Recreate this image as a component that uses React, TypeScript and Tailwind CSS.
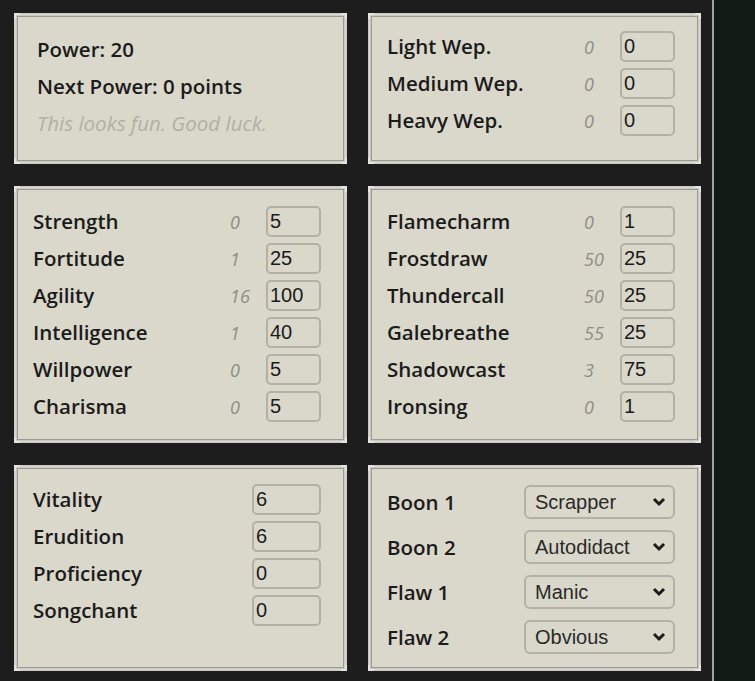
import React from 'react'

const labelFont = { fontFamily: '"Open Sans", "Noto Sans", sans-serif' }

function Corner({ pos }: { pos: string }) {
  return (
    <span
      className={`absolute w-[6px] h-[6px] border-t-2 border-l-2 border-[#e4e4e0] ${pos}`}
    />
  )
}

function Panel({ className = '', children }: { className?: string; children: React.ReactNode }) {
  return (
    <div className={`relative bg-[#d9d8cb] border-[3px] border-double border-[#c8c8c4] shadow-[inset_0_0_0_1px_#9a9a92] ${className}`}>
      <Corner pos="-top-[3px] -left-[3px]" />
      <Corner pos="-top-[3px] -right-[3px] rotate-90" />
      <Corner pos="-bottom-[3px] -left-[3px] -rotate-90" />
      <Corner pos="-bottom-[3px] -right-[3px] rotate-180" />
      {children}
    </div>
  )
}

interface StatRow {
  name: string
  base?: number
  value: number
}

function StatList({ rows, numWidth = 'w-[36px]', inputWidth = 'w-[55px]' }: { rows: StatRow[]; numWidth?: string; inputWidth?: string }) {
  return (
    <div className="flex flex-col">
      {rows.map((r) => (
        <div key={r.name} className="flex items-center h-[37px]">
          <span className="flex-1 text-[20.5px] font-semibold text-[#1b1b1b] leading-none" style={labelFont}>
            {r.name}
          </span>
          {r.base !== undefined && (
            <span className={`${numWidth} text-[18px] italic text-[#8f8e84] leading-none`} style={labelFont}>
              {r.base}
            </span>
          )}
          <input
            readOnly
            value={r.value}
            className={`${inputWidth} h-[31px] rounded-[5px] border-2 border-[#b3b1a3] bg-transparent pl-[2px] text-[20px] text-[#1b1b1b] outline-none`}
            style={{ fontFamily: '"Liberation Sans", Arial, sans-serif' }}
          />
        </div>
      ))}
    </div>
  )
}

const weapons: StatRow[] = [
  { name: 'Light Wep.', base: 0, value: 0 },
  { name: 'Medium Wep.', base: 0, value: 0 },
  { name: 'Heavy Wep.', base: 0, value: 0 },
]

const attributes: StatRow[] = [
  { name: 'Strength', base: 0, value: 5 },
  { name: 'Fortitude', base: 1, value: 25 },
  { name: 'Agility', base: 16, value: 100 },
  { name: 'Intelligence', base: 1, value: 40 },
  { name: 'Willpower', base: 0, value: 5 },
  { name: 'Charisma', base: 0, value: 5 },
]

const attunements: StatRow[] = [
  { name: 'Flamecharm', base: 0, value: 1 },
  { name: 'Frostdraw', base: 50, value: 25 },
  { name: 'Thundercall', base: 50, value: 25 },
  { name: 'Galebreathe', base: 55, value: 25 },
  { name: 'Shadowcast', base: 3, value: 75 },
  { name: 'Ironsing', base: 0, value: 1 },
]

const investments: StatRow[] = [
  { name: 'Vitality', value: 6 },
  { name: 'Erudition', value: 6 },
  { name: 'Proficiency', value: 0 },
  { name: 'Songchant', value: 0 },
]

const traits = [
  { name: 'Boon 1', value: 'Scrapper' },
  { name: 'Boon 2', value: 'Autodidact' },
  { name: 'Flaw 1', value: 'Manic' },
  { name: 'Flaw 2', value: 'Obvious' },
]

export default function App() {
  return (
    <div className="flex min-h-[681px] bg-[#121a14]">
      <div className="w-[714px] shrink-0 bg-[#1d1d1d] border-r-2 border-[#a3a3a3] pl-[14px] pt-[13px] pb-[10px]">
        <div className="grid grid-cols-[333px_333px] gap-x-[21px] gap-y-[22px]">
          {/* power */}
          <Panel className="h-[151px] pt-[15px] pl-[20px]">
            <div className="flex flex-col text-[20.5px] text-[#1b1b1b]" style={labelFont}>
              <div className="h-[37px] flex items-center font-semibold">Power: 20</div>
              <div className="h-[37px] flex items-center font-semibold">Next Power: 0 points</div>
              <div className="h-[37px] flex items-center italic text-[#b1b0a5]">This looks fun. Good luck.</div>
            </div>
          </Panel>

          <Panel className="h-[151px] pt-[12px] pl-[16px] pr-[23px]">
            <StatList rows={weapons} />
          </Panel>

          <Panel className="h-[257px] pt-[14px] pl-[16px] pr-[23px]">
            <StatList rows={attributes} />
          </Panel>

          <Panel className="h-[257px] pt-[14px] pl-[16px] pr-[23px]">
            <StatList rows={attunements} />
          </Panel>

          <Panel className="h-[206px] pt-[13px] pl-[16px] pr-[23px]">
            <StatList rows={investments} inputWidth="w-[69px]" />
          </Panel>

          <Panel className="h-[206px] pt-[17px] pl-[16px] pr-[23px]">
            <div className="flex flex-col gap-[11px]">
              {traits.map((t) => (
                <div key={t.name} className="flex items-center h-[34px]">
                  <span className="flex-1 text-[20.5px] font-semibold text-[#1b1b1b] leading-none" style={labelFont}>
                    {t.name}
                  </span>
                  <div className="relative w-[151px] h-[34px]">
                    <select
                      value={t.value}
                      onChange={() => {}}
                      className="appearance-none w-full h-full rounded-[6px] border-2 border-[#b3b1a3] bg-transparent pl-[9px] text-[20px] text-[#2a2a2a] outline-none"
                      style={{ fontFamily: '"Liberation Sans", Arial, sans-serif' }}
                    >
                      <option>{t.value}</option>
                    </select>
                    <svg
                      className="absolute right-[9px] top-[12px] pointer-events-none"
                      width="14"
                      height="10"
                      viewBox="0 0 14 10"
                    >
                      <path d="M2 2 L7 7 L12 2" fill="none" stroke="#1b1b1b" strokeWidth="3" />
                    </svg>
                  </div>
                </div>
              ))}
            </div>
          </Panel>
        </div>
      </div>
    </div>
  )
}
